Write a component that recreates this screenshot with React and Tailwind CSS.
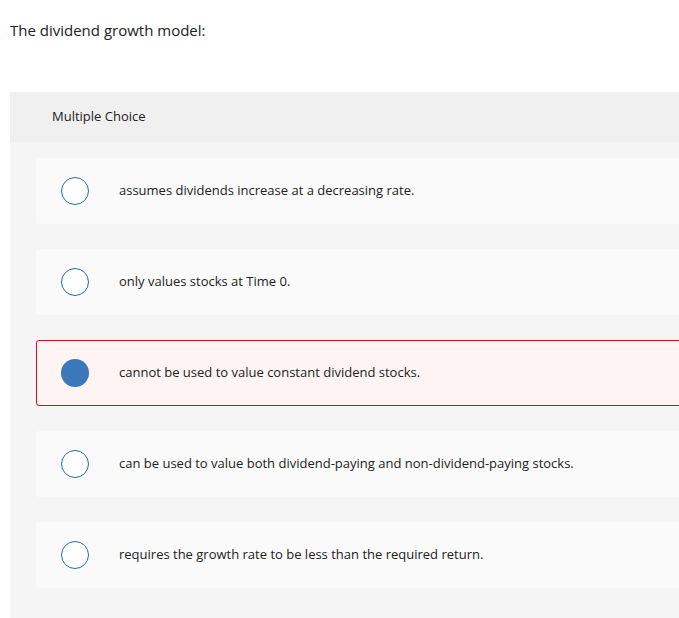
import React from 'react';

const options = [
  { text: 'assumes dividends increase at a decreasing rate.' },
  { text: 'only values stocks at Time 0.' },
  { text: 'cannot be used to value constant dividend stocks.', selected: true },
  { text: 'can be used to value both dividend-paying and non-dividend-paying stocks.' },
  { text: 'requires the growth rate to be less than the required return.' },
];

const Option = ({ text, selected }) => (
  <div
    className={`flex items-center h-[66px] rounded-[3px] border pl-[24px] ${
      selected ? 'bg-[#fdf4f3] border-[#c8102e]' : 'bg-[#fafafa] border-transparent'
    }`}
  >
    <span
      className={`block shrink-0 w-[28px] h-[28px] rounded-full ${
        selected ? 'bg-[#3b78b9]' : 'border border-[#2a6aa8] bg-white'
      }`}
    />
    <span className="ml-[30px] text-[13px] text-[#222]">{text}</span>
  </div>
);

export default function App() {
  return (
    <div
      className="w-[679px] h-[618px] overflow-hidden bg-white"
      style={{ fontFamily: '"Open Sans", sans-serif' }}
    >
      <p className="pt-[20px] pl-[10px] text-[15px] leading-[20px] text-[#222]">
        The dividend growth model:
      </p>
      <div className="mt-[52px] ml-[10px] w-[720px]">
        <div className="h-[50px] bg-[#f0f0f0] flex items-center pl-[42px] text-[13px] text-[#222]">
          Multiple Choice
        </div>
        <div className="bg-[#f5f5f5] pt-[16px] pl-[26px] pb-[30px] flex flex-col gap-[25px]">
          {options.map((o) => (
            <Option key={o.text} {...o} />
          ))}
        </div>
      </div>
    </div>
  );
}
